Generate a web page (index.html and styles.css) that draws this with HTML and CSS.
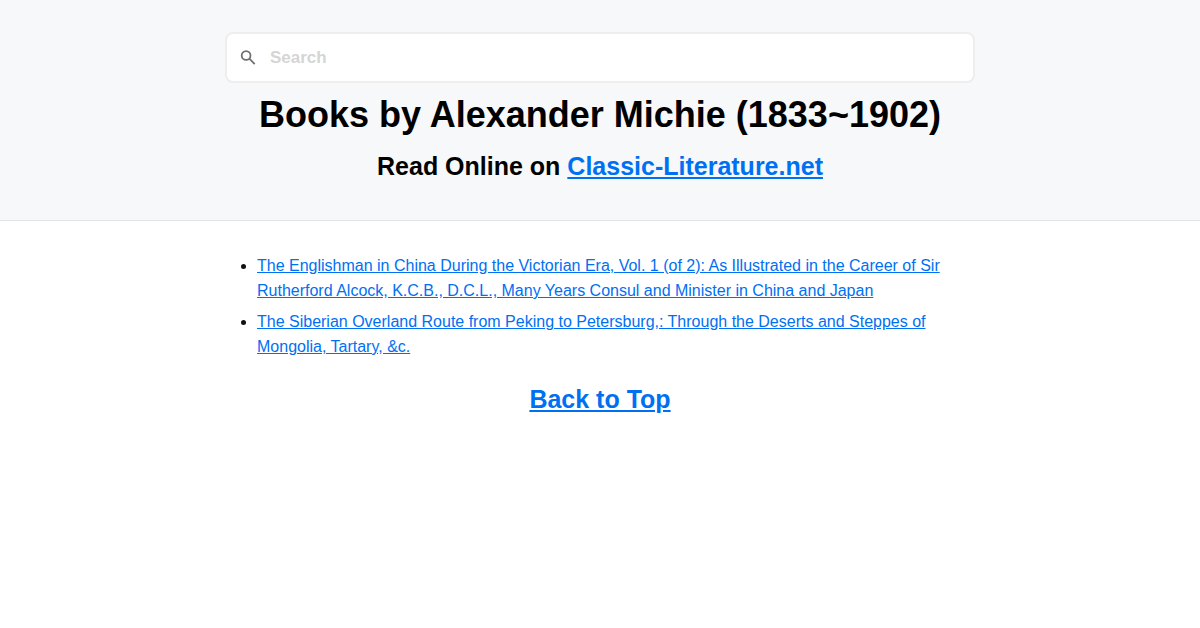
FILE: index.html
```html
<!DOCTYPE html>
<html lang="en">
<head>
<meta charset="utf-8">
<title>Books by Alexander Michie (1833~1902)</title>
<link rel="stylesheet" href="styles.css">
</head>
<body id="top">
<header class="page-header">
  <form class="search" role="search">
    <svg class="search-icon" viewBox="0 0 15 15" aria-hidden="true"><circle cx="5.1" cy="5.5" r="4.4"/><path d="M8.2 8.7 9.2 9.4 13.7 14.1"/></svg>
    <input class="search-input" type="search" placeholder="Search" aria-label="Search">
  </form>
  <h1 class="title">Books by Alexander Michie (1833~1902)</h1>
  <h2 class="subtitle">Read Online on <a href="#">Classic-Literature.net</a></h2>
</header>
<main class="content">
  <ul class="books">
    <li><a href="#">The Englishman in China During the Victorian Era, Vol. 1 (of 2): As Illustrated in the Career of Sir Rutherford Alcock, K.C.B., D.C.L., Many Years Consul and Minister in China and Japan</a></li>
    <li><a href="#">The Siberian Overland Route from Peking to Petersburg,: Through the Deserts and Steppes of Mongolia, Tartary, &amp;c.</a></li>
  </ul>
  <h2 class="back"><a href="#top">Back to Top</a></h2>
</main>
</body>
</html>
```
FILE: styles.css
```css
* { box-sizing: border-box; }
body {
  margin: 0;
  background: #fff;
  color: #111;
  font: 16px/25px "Liberation Sans", Arial, sans-serif;
}
a { color: #0070f3; text-decoration: underline; }
.page-header {
  padding: 32px 16px 38px;
  background: #f6f8fa;
  border-bottom: 1px solid #e2e5e8;
  color: #000;
  text-align: center;
}
.search {
  display: flex;
  align-items: center;
  gap: 14px;
  max-width: 750px;
  height: 51px;
  margin: 0 auto 8px;
  padding: 0 14px;
  background: #fff;
  border: 2px solid #eee;
  border-radius: 8px;
}
.search-icon {
  width: 15px;
  height: 15px;
  overflow: visible;
  fill: none;
  stroke: #707070;
  stroke-width: 1.8;
}
.search-input {
  flex: 1;
  min-width: 0;
  padding: 0;
  border: 0;
  outline: 0;
  background: none;
  font: bold 17px/24px "Liberation Sans", Arial, sans-serif;
}
.search-input::placeholder { color: #d5d5d5; opacity: 1; }
.title { margin: 0 0 12px; font-size: 36px; line-height: 48px; }
.subtitle { margin: 0; font-size: 25px; line-height: 31px; }
.content { max-width: 782px; margin: 0 auto; padding: 32px 16px; }
.books { margin: 0; padding-left: 32px; }
.books li { margin-bottom: 6px; }
.back { margin: 25px 0 0; font-size: 25px; line-height: 31px; text-align: center; }
```
